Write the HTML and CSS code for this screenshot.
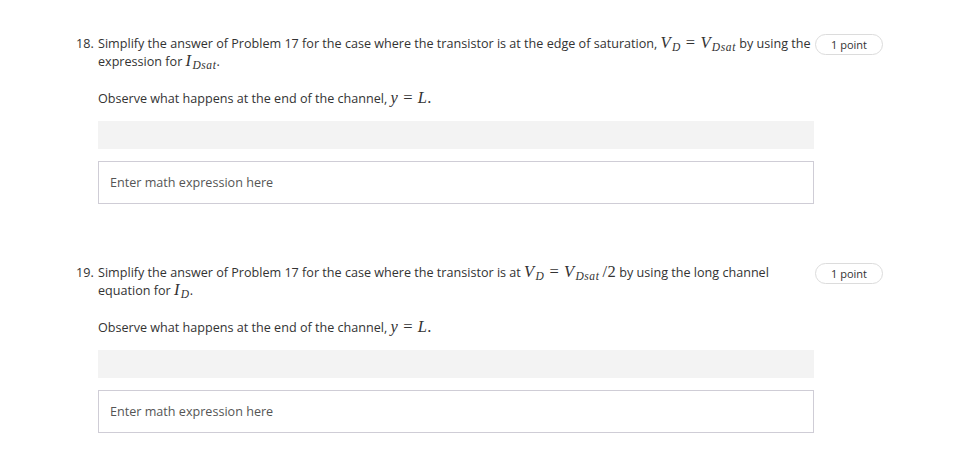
FILE: index.html
```html
<!DOCTYPE html>
<html>
<head>
<meta charset="utf-8">
<link rel="stylesheet" href="styles.css">
</head>
<body>
<div class="page">
  <div class="question q18">
    <div class="num">18.</div>
    <div class="content">
      <p class="prompt">Simplify the answer of Problem 17 for the case where the transistor is at the edge of saturation, <span class="m"><i>V</i><sub><i>D</i></sub><span class="op">=</span><i>V</i><sub><i>Dsat</i></sub></span> by using the<br>expression for <span class="m"><i>I</i><sub><i>Dsat</i></sub></span>.</p>
      <p class="hint">Observe what happens at the end of the channel, <span class="m"><i>y</i><span class="op">=</span><i>L</i>.</span></p>
      <div class="blank"></div>
      <div class="input">Enter math expression here</div>
    </div>
    <div class="points">1 point</div>
  </div>
  <div class="question q19">
    <div class="num">19.</div>
    <div class="content">
      <p class="prompt">Simplify the answer of Problem 17 for the case where the transistor is at <span class="m"><i>V</i><sub><i>D</i></sub><span class="op">=</span><i>V</i><sub><i>Dsat</i></sub><span class="slash">/2</span></span> by using the long channel<br>equation for <span class="m"><i>I</i><sub><i>D</i></sub></span>.</p>
      <p class="hint">Observe what happens at the end of the channel, <span class="m"><i>y</i><span class="op">=</span><i>L</i>.</span></p>
      <div class="blank"></div>
      <div class="input">Enter math expression here</div>
    </div>
    <div class="points">1 point</div>
  </div>
</div>
</body>
</html>
```

FILE: styles.css
```css
html, body {
  margin: 0;
  padding: 0;
  background: #fff;
}
body {
  font-family: "Open Sans", "Liberation Sans", sans-serif;
  font-size: 12.6px;
  color: #333;
}
.page {
  padding: 35px 0 0 76px;
  width: 808px;
}
.question {
  display: flex;
  align-items: flex-start;
}
.q19 {
  margin-top: 60px;
}
.num {
  width: 22px;
  flex: none;
  line-height: 18px;
}
.content {
  width: 716px;
  flex: none;
}
.prompt {
  margin: 0;
  line-height: 18px;
  white-space: nowrap;
}
.hint {
  margin: 19px 0 0 0;
  line-height: 18px;
}
.m {
  font-family: "Liberation Serif", "DejaVu Serif", serif;
  font-size: 16.5px;
  line-height: 0;
  letter-spacing: 0.3px;
}
.m i {
  font-style: italic;
}
.m sub {
  font-size: 11.5px;
  vertical-align: -3px;
  line-height: 0;
  margin-left: 1px;
  letter-spacing: 0.6px;
}
.op {
  font-style: normal;
  padding: 0 5px;
}
.slash {
  margin-left: 3px;
}
.blank {
  margin-top: 13px;
  height: 28px;
  background: #f3f3f3;
}
.input {
  margin-top: 12px;
  height: 41px;
  border: 1px solid #cfcdd6;
  box-sizing: content-box;
  display: flex;
  align-items: center;
  padding-left: 11px;
  color: #555;
  font-size: 12.6px;
}
.points {
  flex: none;
  margin-left: 1px;
  margin-top: -1px;
  width: 66px;
  height: 19px;
  border: 1px solid #dcdcdc;
  border-radius: 11px;
  font-size: 11px;
  line-height: 19px;
  text-align: center;
  color: #333;
}
```
